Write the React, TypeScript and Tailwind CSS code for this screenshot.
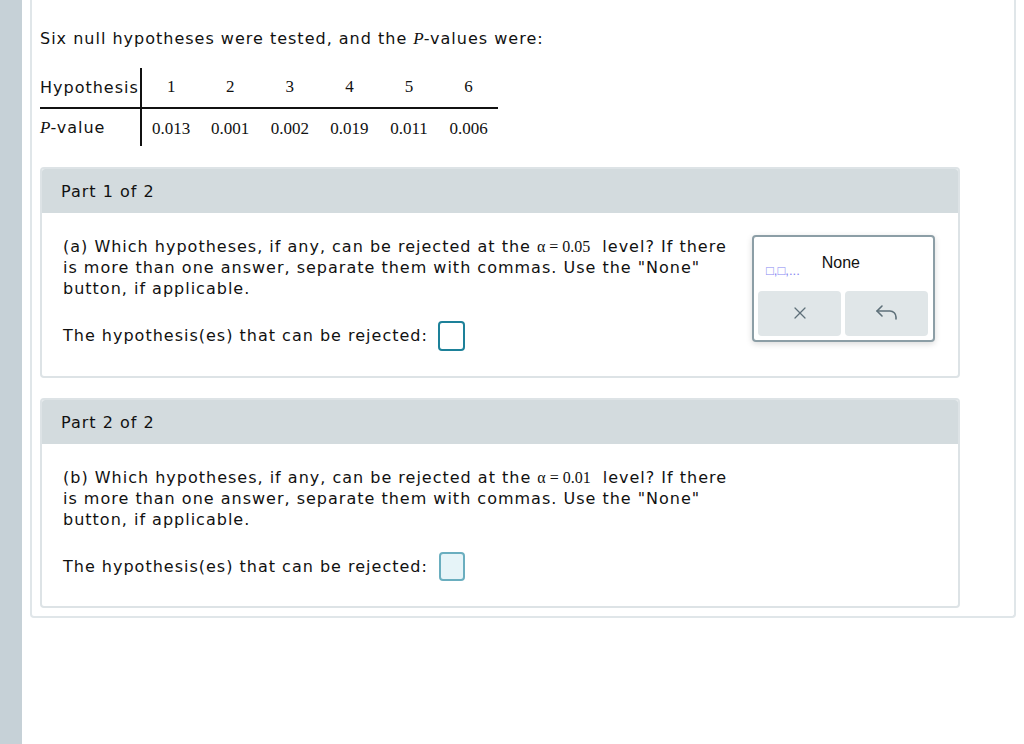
import { X } from 'lucide-react';

const values = ['0.013', '0.001', '0.002', '0.019', '0.011', '0.006'];

function Alpha({ v }: { v: string }) {
  return (
    <span className="font-['Liberation_Serif',serif] text-[16px] tracking-normal ml-[6px] mr-[12px]">
      α<span className="mx-[4px]">=</span>
      {v}
    </span>
  );
}

function AnswerBox({ filled }: { filled?: boolean }) {
  return filled ? (
    <span className="inline-block align-middle w-[26px] h-[29px] ml-[11px] rounded-[4px] border-2 border-[#6aaebf] bg-[#e6f4f8]" />
  ) : (
    <span className="inline-block align-middle w-[27px] h-[30px] ml-[10px] rounded-[4px] border-2 border-[#1d8199] bg-white" />
  );
}

function BackArrow() {
  return (
    <svg width="26" height="20" viewBox="0 0 26 20" fill="none" stroke="#5e7079" strokeWidth="1.6" strokeLinecap="round" strokeLinejoin="round">
      <path d="M8 3 3 8l5 5" />
      <path d="M3 8h13a6 6 0 0 1 6 6v2" />
    </svg>
  );
}

function Part({
  n,
  letter,
  alpha,
  filled,
  keypad,
}: {
  n: number;
  letter: string;
  alpha: string;
  filled?: boolean;
  keypad?: boolean;
}) {
  return (
    <div className="relative w-[920px] rounded-[4px] border-2 border-[#dde3e6]">
      <div className="h-[44px] bg-[#d3dbde] pl-[19px] pt-[11px] rounded-t-[3px]">
        Part {n} of 2
      </div>
      <div className="pl-[21px] pt-[23px] pb-[25px] leading-[21px]">
        <div>
          ({letter}) Which hypotheses, if any, can be rejected at the
          <Alpha v={alpha} />level? If there
        </div>
        <div>is more than one answer, separate them with commas. Use the "None"</div>
        <div>button, if applicable.</div>
        <div className="mt-[22px] flex items-center">
          The hypothesis(es) that can be rejected:
          <AnswerBox filled={filled} />
        </div>
      </div>
      {keypad && (
        <div className="absolute left-[710px] top-[66px] w-[183px] h-[107px] rounded-[4px] border-2 border-[#8c9ea6] bg-white shadow-[0_2px_6px_rgba(0,0,0,0.15)] tracking-normal">
          <div className="flex items-center h-[54px] pl-[12px]">
            <span className="text-[#8585f2] text-[13px] mt-[14px] font-['Liberation_Sans',sans-serif]">
              □,□,...
            </span>
            <span className="ml-[22px] mb-[2px] text-[16px] font-['Liberation_Sans',sans-serif]">None</span>
          </div>
          <div className="flex gap-[4px] px-[4px]">
            <div className="w-[83px] h-[45px] rounded-[4px] bg-[#e0e6e8] flex items-center justify-center">
              <X size={20} strokeWidth={1.5} color="#5e7079" />
            </div>
            <div className="w-[83px] h-[45px] rounded-[4px] bg-[#e0e6e8] flex items-center justify-center">
              <BackArrow />
            </div>
          </div>
        </div>
      )}
    </div>
  );
}

export default function App() {
  return (
    <div className="w-[1024px] h-[744px] bg-white flex font-['DejaVu_Sans',Verdana,sans-serif] text-[16px] tracking-[1px] text-[#111] overflow-hidden">
      <div className="w-[22px] h-full bg-[#c6d1d7]" />
      <div className="ml-[8px] w-[986px] h-[618px] border-l-2 border-r-2 border-b-2 border-[#e0e6e9] rounded-b-[4px] pl-[8px]">
        <div className="pt-[26px]">
          Six null hypotheses were tested, and the{' '}
          <span className="font-['Liberation_Serif',serif] italic text-[17px] tracking-normal">P</span>-values were:
        </div>
        <table className="mt-[16px] border-collapse">
          <tbody>
            <tr className="border-b-2 border-[#111]">
              <td className="h-[40px] pr-[1px] border-r-2 border-[#111] align-bottom pb-[7px]">Hypothesis</td>
              {values.map((_, i) => (
                <td key={i} className="w-[59.6px] text-center align-bottom pb-[7px] font-['Liberation_Serif',serif] text-[17px] tracking-normal">
                  {i + 1}
                </td>
              ))}
            </tr>
            <tr>
              <td className="h-[38px] border-r-2 border-[#111] align-top pt-[6px]">
                <span className="font-['Liberation_Serif',serif] italic text-[17px] tracking-normal">P</span>-value
              </td>
              {values.map((v) => (
                <td key={v} className="text-center align-top pt-[7px] font-['Liberation_Serif',serif] text-[17px] tracking-normal">
                  {v}
                </td>
              ))}
            </tr>
          </tbody>
        </table>
        <div className="mt-[21px] flex flex-col gap-[20px]">
          <Part n={1} letter="a" alpha="0.05" keypad />
          <Part n={2} letter="b" alpha="0.01" filled />
        </div>
      </div>
    </div>
  );
}
